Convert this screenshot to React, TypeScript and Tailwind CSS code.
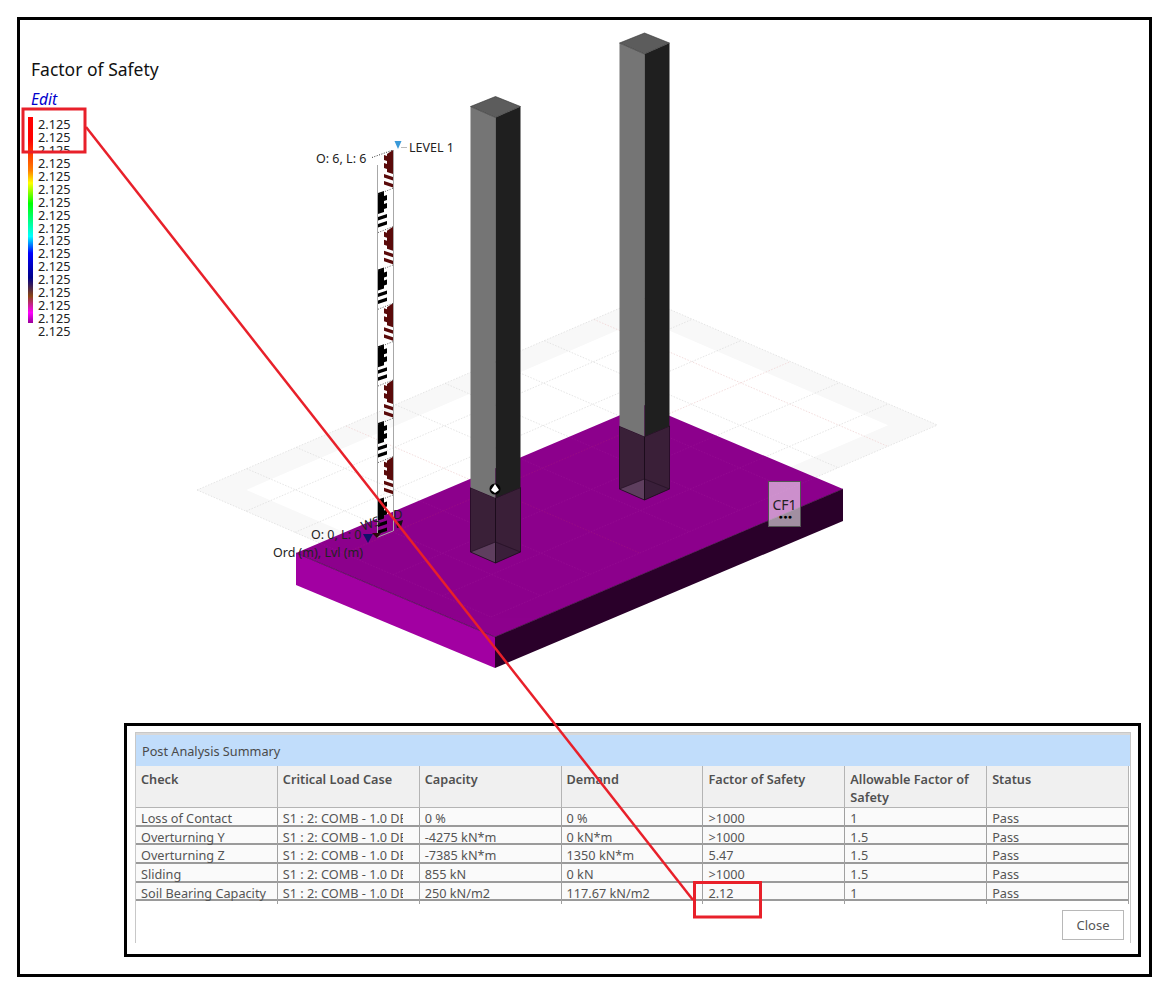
const legend = Array.from({ length: 17 }, () => '2.125')

const headers = ['Check', 'Critical Load Case', 'Capacity', 'Demand', 'Factor of Safety', 'Allowable Factor of Safety', 'Status']

const loadCase = 'S1 : 2: COMB - 1.0 DEAD + 1.0 LIVE'
const rows = [
  ['Loss of Contact', loadCase, '0 %', '0 %', '>1000', '1', 'Pass'],
  ['Overturning Y', loadCase, '-4275 kN*m', '0 kN*m', '>1000', '1.5', 'Pass'],
  ['Overturning Z', loadCase, '-7385 kN*m', '1350 kN*m', '5.47', '1.5', 'Pass'],
  ['Sliding', loadCase, '855 kN', '0 kN', '>1000', '1.5', 'Pass'],
  ['Soil Bearing Capacity', loadCase, '250 kN/m2', '117.67 kN/m2', '2.12', '1', 'Pass'],
]

// iso grid behind the footing
const pt = (a: number, b: number) => [197 + a * 49.6 + b * 49, 490 - a * 21.33 + b * 21.17]
const poly = (p: number[][]) => p.map((q) => q.join(',')).join(' ')
const ringPath = (c: number[][]) => 'M' + c.map((q) => q.join(' ')).join('L') + 'Z'

function GridLines({ stroke, pink }: { stroke: string; pink: string }) {
  return (
    <g strokeWidth="0.8" strokeDasharray="1.5 1.5" fill="none">
      {Array.from({ length: 10 }, (_, a) => {
        const [x1, y1] = pt(a, 0)
        const [x2, y2] = pt(a, 6)
        return <line key={'a' + a} x1={x1} y1={y1} x2={x2} y2={y2} stroke={a === 3 || a === 8 ? pink : stroke} />
      })}
      {Array.from({ length: 7 }, (_, b) => {
        const [x1, y1] = pt(0, b)
        const [x2, y2] = pt(9, b)
        return <line key={'b' + b} x1={x1} y1={y1} x2={x2} y2={y2} stroke={b === 3 ? pink : stroke} />
      })}
    </g>
  )
}

// square post with the footing below it, see-through
function Post({ x, top, gray, foot }: { x: number; top: number; gray: number; foot: number }) {
  const c = x + 25
  const r = x + 50
  return (
    <g>
      <polygon points={poly([[x, gray], [c, gray + 10.5], [c, foot + 11], [x, foot]])} fill="#3a2038" />
      <polygon points={poly([[c, gray + 10.5], [r, gray], [r, foot], [c, foot + 11]])} fill="#3a1f38" />
      <polygon points={poly([[x, foot], [c, foot - 10], [c, foot + 11]])} fill="#5e3e5e" />
      <polygon points={poly([[c, foot - 10], [r, foot], [c, foot + 11]])} fill="#3a1f3a" />
      <polyline points={poly([[x, foot], [c, foot - 10], [r, foot]])} fill="none" stroke="#241024" strokeWidth="0.7" />
      <line x1={c} y1={foot - 10} x2={c} y2={gray + 10} stroke="#241024" strokeWidth="0.7" />
      <polygon points={poly([[x, gray], [c, gray + 10.5], [c, foot + 11], [x, foot]])} fill="none" stroke="#1c0c1c" strokeWidth="0.8" />
      <polygon points={poly([[c, gray + 10.5], [r, gray], [r, foot], [c, foot + 11]])} fill="none" stroke="#1c0c1c" strokeWidth="0.8" />
      <polygon points={poly([[x, top], [c, top + 11], [c, gray + 10.5], [x, gray]])} fill="#757575" />
      <polygon points={poly([[c, top + 11], [r, top], [r, gray], [c, gray + 10.5]])} fill="#1f1f1f" />
      <polygon points={poly([[x, top], [c, top - 10], [r, top], [c, top + 11]])} fill="#5c5c5c" stroke="#333" strokeWidth="0.6" />
    </g>
  )
}

// one tick block on the ordinate strip, dir -1 means teeth to the left
function Tick({ x, y, dir, fill }: { x: number; y: number; dir: number; fill: string }) {
  const bx = (v: number) => x + dir * v
  const up = dir > 0 ? 0 : 3
  return (
    <g fill={fill}>
      <polygon
        points={poly([
          [bx(0), y + 3 - up], [bx(6), y + 1 + up], [bx(6), y + 6], [bx(9), y + 5], [bx(9), y + 10], [bx(6), y + 11],
          [bx(6), y + 14], [bx(9), y + 13], [bx(9), y + 18], [bx(6), y + 19], [bx(6), y + 22], [bx(0), y + 24],
        ])}
      />
      <polygon points={poly([[bx(0), y + 27], [bx(9), y + 24], [bx(9), y + 27.5], [bx(0), y + 30.5]])} />
      <polygon points={poly([[bx(0), y + 34], [bx(9), y + 31], [bx(9), y + 34.5], [bx(0), y + 37.5]])} />
    </g>
  )
}

function Strip() {
  return (
    <g>
      <line x1="377.5" y1="165" x2="377.5" y2="538" stroke="#a8a8a8" />
      <line x1="393.5" y1="150" x2="393.5" y2="531" stroke="#a8a8a8" />
      <line x1="378" y1="537" x2="393" y2="531" stroke="#a8a8a8" />
      {[150, 226.7, 303.3, 380, 456.7].map((y) => (
        <Tick key={y} x={393} y={y} dir={-1} fill="#5a0a0a" />
      ))}
      {[190, 266.6, 343.3, 420, 496.6].map((y) => (
        <Tick key={y} x={378} y={y} dir={1} fill="#000" />
      ))}
      {[188.3, 226.6, 265, 303.3, 341.6, 380, 418.3, 456.6, 495].map((y) => (
        <line key={y} x1="378" y1={y + 6} x2="393" y2={y} stroke="#333" strokeWidth="0.8" strokeDasharray="1 1.5" />
      ))}
      <line x1="372" y1="157.5" x2="393" y2="150" stroke="#222" strokeWidth="0.9" strokeDasharray="1 1.5" />
      <line x1="401" y1="147.5" x2="407" y2="147.5" stroke="#bbb" />
      <polygon points="394.5,141 401.5,141 398,149" fill="#3a9ad9" />
      <polygon points="363,534 373,534 368,543" fill="#10106a" />
      <polygon points="372,533 381,533 377,538" fill="#2a0a0a" />
      <polygon points="396,522 403,520 401,527 397,528" fill="#111" />
    </g>
  )
}

function Model() {
  const slabClip = poly([[296, 553], [644, 405], [843, 489], [495, 637]])
  return (
    <svg className="absolute left-0 top-0" width="1161" height="987" viewBox="0 0 1161 987">
      <defs>
        <clipPath id="slabTop">
          <polygon points={slabClip} />
        </clipPath>
      </defs>
      <path
        d={ringPath([pt(0, 0), pt(9, 0), pt(9, 6), pt(0, 6)]) + ringPath([pt(0.5, 0.5), pt(8.5, 0.5), pt(8.5, 5.5), pt(0.5, 5.5)])}
        fill="#f8f8f8"
        fillRule="evenodd"
      />
      <GridLines stroke="#dedede" pink="#f0d4d4" />
      <polygon points={slabClip} fill="#8d008d" />
      <polygon points="296,553 495,637 495,668 296,585" fill="#a200a2" />
      <polygon points="495,637 843,489 843,521 495,668" fill="#2a002a" />
      <g clipPath="url(#slabTop)" opacity="0.3">
        <GridLines stroke="#a52a9a" pink="#b8306a" />
      </g>
      <polyline points="296,553 495,637 843,489" fill="none" stroke="#2a002a" strokeWidth="0.6" />
      <Post x={619.5} top={43} gray={426} foot={489} />
      <Strip />
      <Post x={470.5} top={106.5} gray={487.5} foot={552} />
      <circle cx="495" cy="489" r="5.5" fill="#000" />
      <polygon points="495,484 499,490 495,493 491,490" fill="#fff" />
    </svg>
  )
}

function Annotations() {
  return (
    <svg className="absolute left-0 top-0 pointer-events-none" width="1161" height="987" viewBox="0 0 1161 987">
      <g fill="none" stroke="#e8202a">
        <rect x="23" y="109" width="62" height="43" strokeWidth="3" />
        <rect x="694.5" y="882.5" width="66" height="34.5" strokeWidth="3" />
        <line x1="86" y1="127" x2="693" y2="900" strokeWidth="2.5" />
      </g>
    </svg>
  )
}

function Label({ className, children }: { className: string; children: string }) {
  return <div className={'absolute whitespace-nowrap leading-none text-[#222] ' + className}>{children}</div>
}

function SummaryPanel() {
  return (
    <div className="self-end mr-[8px] mb-[17px] w-[1017px] h-[234px] border-[3px] border-black bg-white pl-[8px] pt-[6px]">
      <div className="w-[996px] border-x border-t border-[#c8c8c8] text-[#555] text-[12.7px]">
        <div className="h-[33px] bg-[#c1ddfb] flex items-center pl-[6px] pt-[2px] text-[#4a4a4a] border-t-2 border-[#d8d8d8]">
          Post Analysis Summary
        </div>
        <div className="w-[993px] shadow-[inset_1px_0_0_#c0c0c0]">
          <div className="grid grid-cols-7 h-[42px] bg-[#f0f0f0] border-b border-[#b4b4b4] font-semibold text-[#505050] leading-[18px]">
            {headers.map((h) => (
              <div key={h} className="border-r border-[#b4b4b4] pl-[5px] pr-[4px] pt-[4px]">
                {h}
              </div>
            ))}
          </div>
          {rows.map((row) => (
            <div key={row[0]} className="grid grid-cols-7 h-[18.67px] bg-[#fafafa] border-b-2 border-[#9a9a9a] leading-[21px]">
              {row.map((cell, i) => (
                <div key={i} className="border-r border-[#a0a0a0] pl-[5px] whitespace-nowrap">
                  <div className={i === 1 ? 'w-[120px] h-[17px] overflow-hidden' : ''}>{cell}</div>
                </div>
              ))}
            </div>
          ))}
        </div>
        <div className="flex justify-end pr-[6px] pt-[9px] pb-[3px]">
          <button className="w-[62px] h-[30px] border border-[#b8b8b8] text-[#555] text-[13px]">Close</button>
        </div>
      </div>
    </div>
  )
}

export default function App() {
  return (
    <div className="relative w-[1161px] h-[987px] bg-white pt-[17px] pl-[17px] font-['Noto_Sans',sans-serif] overflow-hidden">
      <Model />

      <Label className="left-[316px] top-[153px] text-[12.5px]">O: 6, L: 6</Label>
      <Label className="left-[409px] top-[142px] text-[12.5px]">LEVEL 1</Label>
      <Label className="left-[311px] top-[529px] text-[12.5px]">O: 0, L: 0</Label>
      <Label className="left-[273px] top-[547px] text-[12.5px]">Ord (m), Lvl (m)</Label>
      <Label className="left-[361px] top-[517px] text-[13px] -rotate-[20deg]">WS</Label>
      <Label className="left-[393px] top-[508px] text-[13px]">D</Label>

      {/* CF1 tag */}
      <div className="absolute left-[768px] top-[481px] w-[33px] h-[46px] border border-[#555] bg-[#ffffff8f] flex flex-col items-center pt-[15px] text-[14px] leading-[16px] text-[#222]">
        <span>CF1</span>
        <span className="text-[7px] leading-[8px] tracking-[0.5px] text-black pl-[2px]">●●●</span>
      </div>

      <div className="relative w-[1135px] h-[960px] border-[3px] border-black flex flex-col justify-between">
        <div className="pl-[11px] pt-[38px]">
          <div className="text-[17.5px] leading-[22px] text-[#111]">Factor of Safety</div>
          <div className="mt-[10px] text-[15.5px] leading-[18px] italic text-[#0000cc]">Edit</div>
          <div className="flex gap-[5px] -ml-[3px] mt-[5px]">
            <div className="w-[5px] h-[206px] mt-[4px] bg-[linear-gradient(to_bottom,#ff0000_0%,#ff0000_11%,#ff7f00_26%,#ffff00_32%,#00ff00_42%,#00ffff_58%,#0000ff_66%,#000088_78%,#8b4513_87%,#ff00ff_95%,#990099_100%)]" />
            <div className="mt-[5px] text-[12.7px] leading-[12.94px] text-[#222]">
              {legend.map((v, i) => (
                <div key={i} className={i === 2 ? 'h-[8px] overflow-hidden mb-[4.94px]' : ''}>
                  {v}
                </div>
              ))}
            </div>
          </div>
        </div>
        <SummaryPanel />
      </div>

      <Annotations />
    </div>
  )
}
